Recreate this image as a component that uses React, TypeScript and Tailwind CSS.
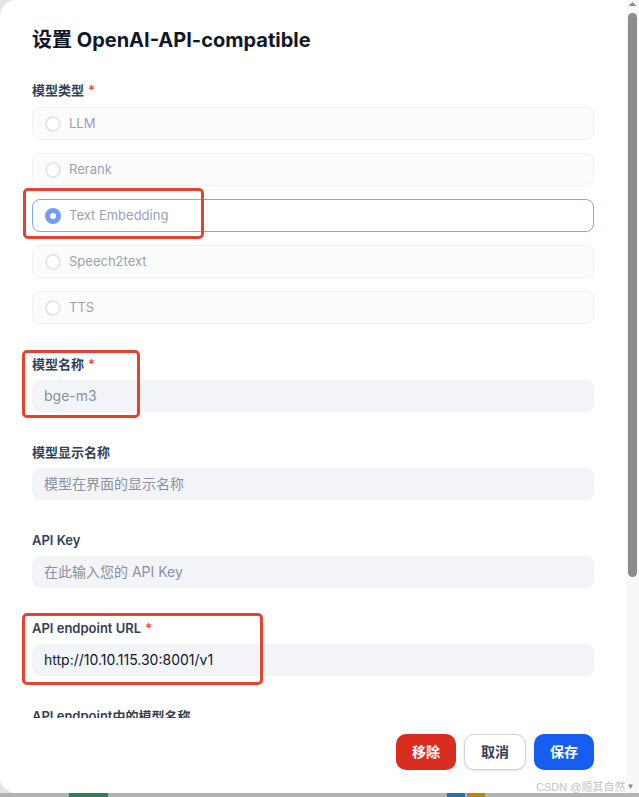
import type { ReactNode } from 'react';

const MODEL_TYPES = ['LLM', 'Rerank', 'Text Embedding', 'Speech2text', 'TTS'];
const SELECTED_TYPE = 'Text Embedding';

function FieldLabel({ children, required }: { children: ReactNode; required?: boolean }) {
  return (
    <div className="h-5 text-[13px] font-semibold leading-5 text-[#354052]">
      {children}
      {required ? <span className="ml-1 text-[#f04438]">*</span> : null}
    </div>
  );
}

function RadioOption({ label, checked }: { label: string; checked: boolean }) {
  return (
    <div
      className={
        checked
          ? 'flex h-[33px] items-center gap-2 rounded-lg border border-[#7fa9f8] bg-white pl-3'
          : 'flex h-[33px] items-center gap-2 rounded-lg border border-[#eef0f3] bg-[#fcfcfd] pl-3'
      }
    >
      {checked ? (
        <span className="flex h-4 w-4 items-center justify-center rounded-full bg-[#6f9cf7]">
          <span className="h-1.5 w-1.5 rounded-full bg-white" />
        </span>
      ) : (
        <span className="h-4 w-4 rounded-full border-2 border-[#e4e7ec] bg-white" />
      )}
      <span className="text-[13px] text-[#98a2b3]">{label}</span>
    </div>
  );
}

function TextField({ value, placeholder }: { value?: string; placeholder?: string }) {
  return (
    <div className="mt-1.5 flex h-8 items-center rounded-lg bg-[#f2f4f7] px-3 text-sm">
      {value ? (
        <span className="text-[#101828]">{value}</span>
      ) : (
        <span className="text-[#8a919f]">{placeholder}</span>
      )}
    </div>
  );
}

function Marker({ className }: { className: string }) {
  return <div className={`pointer-events-none absolute rounded-[5px] border-[3px] border-[#e5432d] ${className}`} />;
}

export default function App() {
  return (
    <div
      className="relative flex h-[797px] w-[639px] flex-col overflow-hidden bg-[#e4e4e4]"
      style={{ fontFamily: 'Inter, "Noto Sans CJK SC", sans-serif' }}
    >
      <div className="flex h-[793px] overflow-hidden rounded-l-2xl bg-white">
        <div className="flex min-w-0 flex-1 flex-col">
          <div className="flex-1 overflow-hidden px-8 pt-6">
            <h1 className="h-8 text-[20px] font-bold leading-8 text-[#101828]">设置 OpenAI-API-compatible</h1>

            <div className="mt-6">
              <FieldLabel required>模型类型</FieldLabel>
              <div className="mt-[7px] flex flex-col gap-[13px]">
                {MODEL_TYPES.map((t) => (
                  <RadioOption key={t} label={t} checked={t === SELECTED_TYPE} />
                ))}
              </div>
            </div>

            <div className="mt-[30px] flex flex-col gap-[30px]">
              <div>
                <FieldLabel required>模型名称</FieldLabel>
                <TextField placeholder="bge-m3" />
              </div>
              <div>
                <FieldLabel>模型显示名称</FieldLabel>
                <TextField placeholder="模型在界面的显示名称" />
              </div>
              <div>
                <FieldLabel>API Key</FieldLabel>
                <TextField placeholder="在此输入您的 API Key" />
              </div>
              <div>
                <FieldLabel required>API endpoint URL</FieldLabel>
                <TextField value="http://10.10.115.30:8001/v1" />
              </div>
              <div>
                <FieldLabel>API endpoint中的模型名称</FieldLabel>
                <TextField placeholder="" />
              </div>
            </div>
          </div>

          <div className="flex shrink-0 justify-end gap-2 px-8 pb-[23px] pt-4">
            <button className="h-9 w-[60px] rounded-[10px] bg-[#d92d20] text-sm font-semibold text-white">移除</button>
            <button className="h-9 w-[62px] rounded-[10px] border border-[#d0d5dd] bg-white text-sm font-semibold text-[#354052] shadow-sm">
              取消
            </button>
            <button className="h-9 w-[60px] rounded-[10px] bg-[#155eef] text-sm font-semibold text-white">保存</button>
          </div>
        </div>

        {/* window scrollbar */}
        <div className="flex w-[13px] shrink-0 flex-col items-center bg-[#f8f8f8]">
          <svg width="9" height="6" viewBox="0 0 9 6" className="mt-[1px]">
            <path d="M4.5 1 L8.5 5 L0.5 5 Z" fill="#8d8d8d" />
          </svg>
          <div className="mt-[6px] h-[564px] w-[9px] rounded-full bg-[#8d8d8d]" />
        </div>
      </div>

      {/* page behind the dialog */}
      <div className="flex h-[4px] bg-[#b3b3b3]">
        <div className="ml-[69px] w-[39px] bg-[#2f7d5c]" />
        <div className="ml-[339px] w-[18px] bg-[#1b78b6]" />
        <div className="ml-[2px] w-[18px] bg-[#b8860b]" />
      </div>

      <Marker className="left-[23px] top-[188px] h-[51px] w-[181px]" />
      <Marker className="left-[22px] top-[350px] h-[68px] w-[118px]" />
      <Marker className="left-[22px] top-[613px] h-[72px] w-[241px]" />

      <div
        className="pointer-events-none absolute left-[536px] top-[779px] flex items-center text-[11px] leading-4 text-[#c4c4c4]"
        style={{ fontFamily: '"Liberation Sans", "Noto Sans CJK SC", sans-serif' }}
      >
        <span>CSDN @顺其自然</span>
        <span className="ml-[1px] text-[8px] text-[#8d8d8d]">▼</span>
      </div>
    </div>
  );
}
